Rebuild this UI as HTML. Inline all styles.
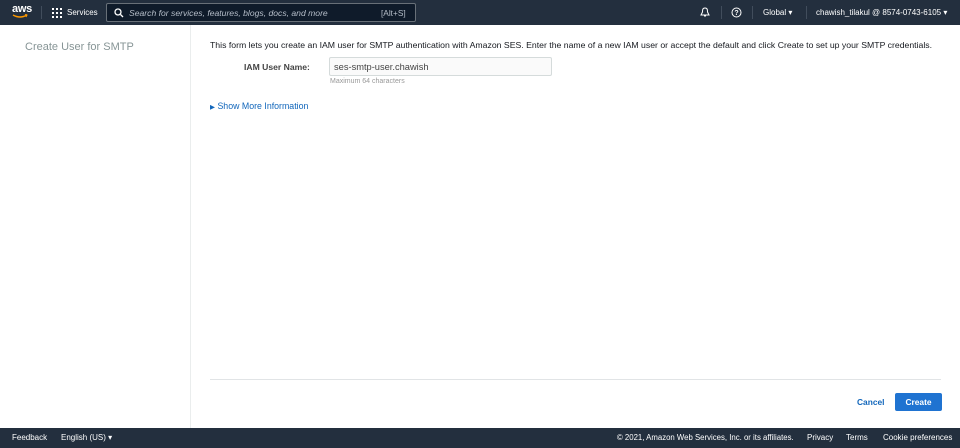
<!DOCTYPE html>
<html><head><style>
*{margin:0;padding:0;box-sizing:border-box}
body{width:960px;height:448px;overflow:hidden;font-family:"Liberation Sans",Arial,sans-serif;background:#fff;position:relative;color:#16191f}
.hdr{position:absolute;left:0;top:0;width:960px;height:25px;background:#232f3e;color:#fff;font-size:8px}
.ftr{position:absolute;left:0;top:428px;width:960px;height:20px;background:#232f3e;color:#fff;font-size:8px}
.a{position:absolute;white-space:nowrap}
.sep{position:absolute;top:6px;width:1px;height:13px;background:#414d5c}
</style></head><body>
<div class="hdr">
 <div class="a" style="left:12px;top:3px;font-size:11px;font-weight:bold;letter-spacing:-0.3px">aws</div>
 <svg class="a" style="left:12px;top:14px" width="16" height="5"><path d="M1 1 Q8 5 15 1" stroke="#f90" stroke-width="1.4" fill="none"/><path d="M13 0 L15 1 L14 3" stroke="#f90" stroke-width="1" fill="none"/></svg>
 <div class="sep" style="left:41px"></div>
 <svg class="a" style="left:52px;top:8px" width="10" height="10" fill="#fff"><rect x="0" y="0" width="2" height="2"/><rect x="4" y="0" width="2" height="2"/><rect x="8" y="0" width="2" height="2"/><rect x="0" y="4" width="2" height="2"/><rect x="4" y="4" width="2" height="2"/><rect x="8" y="4" width="2" height="2"/><rect x="0" y="8" width="2" height="2"/><rect x="4" y="8" width="2" height="2"/><rect x="8" y="8" width="2" height="2"/></svg>
 <div class="a" style="left:67px;top:8px">Services</div>
 <div class="a" style="left:106px;top:3px;width:310px;height:19px;background:#0f1b2a;border:1px solid #687078;border-radius:2px"></div>
 <svg class="a" style="left:114px;top:8px" width="10" height="10"><circle cx="4" cy="4" r="3" stroke="#fff" stroke-width="1.3" fill="none"/><path d="M6.5 6.5 L9 9" stroke="#fff" stroke-width="1.3"/></svg>
 <div class="a" style="left:129px;top:8px;font-style:italic;color:#b6bec9;font-size:8.6px">Search for services, features, blogs, docs, and more</div>
 <div class="a" style="left:381px;top:8px;color:#b6bec9;font-size:8.3px">[Alt+S]</div>
 <svg class="a" style="left:700px;top:7px" width="10" height="11"><path d="M5 1 C2.5 1 2.5 3 2.5 5 L1 8 L9 8 L7.5 5 C7.5 3 7.5 1 5 1Z M4 9 L6 9" stroke="#fff" stroke-width="1" fill="none"/></svg>
 <div class="sep" style="left:721px"></div>
 <svg class="a" style="left:731px;top:7px" width="11" height="11"><circle cx="5.5" cy="5.5" r="4.5" stroke="#fff" stroke-width="1" fill="none"/><text x="5.5" y="8" font-size="7" fill="#fff" text-anchor="middle" font-family="Liberation Sans" font-weight="bold">?</text></svg>
 <div class="sep" style="left:752px"></div>
 <div class="a" style="left:763px;top:8px">Global ▾</div>
 <div class="sep" style="left:806px"></div>
 <div class="a" style="left:816px;top:8px">chawish_tilakul @ 8574-0743-6105 ▾</div>
</div>
<div class="a" style="left:0;top:25px;width:191px;height:403px;border-right:1px solid #eaeded"></div>
<div class="a" style="left:25px;top:41px;font-size:11px;color:#879596">Create User for SMTP</div>
<div class="a" style="left:210px;top:40px;font-size:8.7px;color:#16191f">This form lets you create an IAM user for SMTP authentication with Amazon SES. Enter the name of a new IAM user or accept the default and click Create to set up your SMTP credentials.</div>
<div class="a" style="left:244px;top:62px;font-size:8.6px;font-weight:bold;color:#444">IAM User Name:</div>
<div class="a" style="left:329px;top:57px;width:223px;height:19px;border:1px solid #d5dbdb;border-radius:2px;background:#fafafa;font-size:9.3px;padding:4px 0 0 4px;color:#444">ses-smtp-user.chawish</div>
<div class="a" style="left:330px;top:78px;font-size:7px;color:#999">Maximum 64 characters</div>
<div class="a" style="left:210px;top:101px;font-size:8.8px;color:#1166bb"><span style="font-size:6.5px;color:#1166bb">▶</span> Show More Information</div>
<div class="a" style="left:210px;top:379px;width:731px;height:1px;background:#e1e4e6"></div>
<div class="a" style="left:857px;top:397px;font-size:8.4px;font-weight:bold;color:#1166bb">Cancel</div>
<div class="a" style="left:895px;top:393px;width:47px;height:18px;background:#1f73d1;border-radius:2px;color:#fff;font-size:8.4px;font-weight:bold;text-align:center;line-height:18px">Create</div>
<div class="ftr">
 <div class="a" style="left:12px;top:5px">Feedback</div>
 <div class="a" style="left:61px;top:5px">English (US) ▾</div>
 <div class="a" style="left:617px;top:5px;font-size:7.8px">© 2021, Amazon Web Services, Inc. or its affiliates.</div>
 <div class="a" style="left:807px;top:5px">Privacy</div>
 <div class="a" style="left:846px;top:5px">Terms</div>
 <div class="a" style="left:883px;top:5px">Cookie preferences</div>
</div>
</body></html>
